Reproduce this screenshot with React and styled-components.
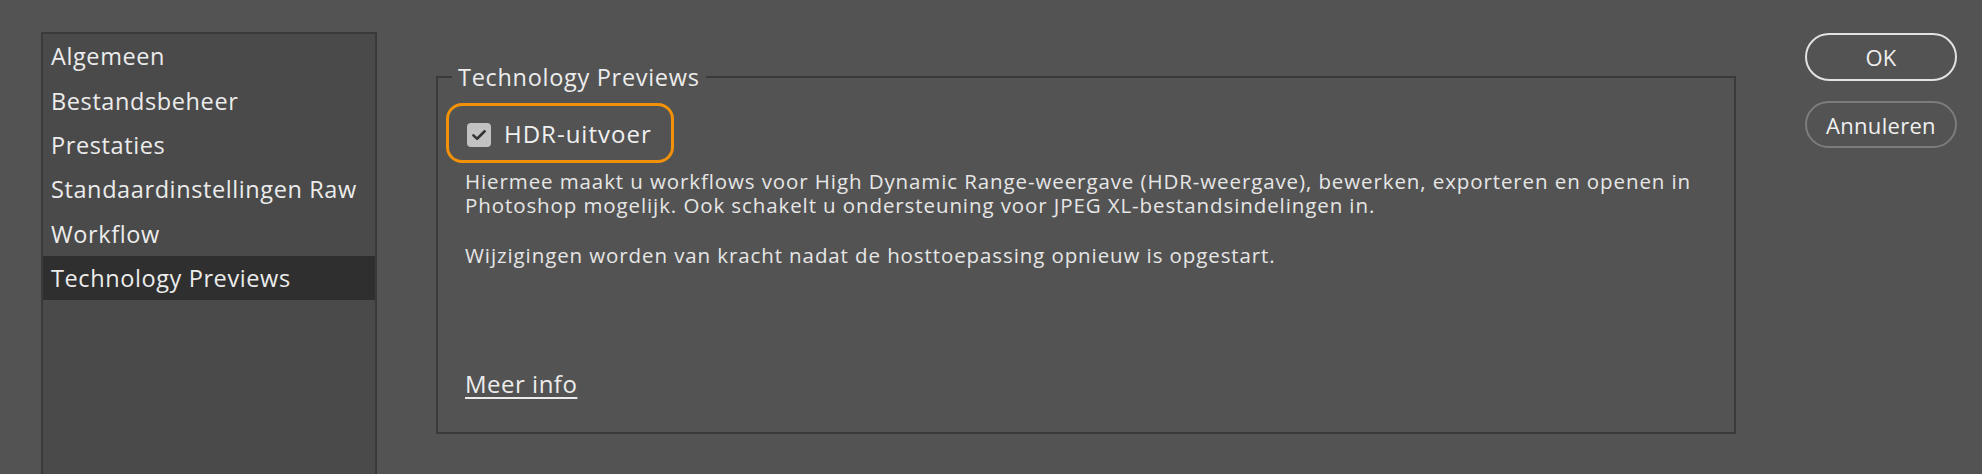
import React from 'react';
import styled, { createGlobalStyle } from 'styled-components';

const GlobalStyle = createGlobalStyle`
  html, body {
    margin: 0;
    background: #535353;
  }
  body {
    font-family: "Open Sans", "Noto Sans", sans-serif;
    color: #e8e8e8;
    -webkit-font-smoothing: antialiased;
  }
`;

const Page = styled.div`
  display: flex;
  align-items: flex-start;
  box-sizing: border-box;
  width: 1982px;
  height: 474px;
  padding: 32px 0 0 41px;
  overflow: hidden;
`;

const Sidebar = styled.ul`
  box-sizing: border-box;
  width: 336px;
  height: 442px;
  margin: 0;
  padding: 0;
  list-style: none;
  background: #4a4a4a;
  border: 2px solid #3a3a3a;
  border-bottom: none;
`;

const NavItem = styled.li`
  display: flex;
  align-items: center;
  height: 44.4px;
  padding-left: 8px;
  font-size: 23.5px;
  letter-spacing: 0.6px;
  color: #ececec;
  background: ${p => (p.$active ? '#2f2f2f' : 'transparent')};
`;

const Main = styled.div`
  margin-left: 59px;
`;

const Group = styled.fieldset`
  box-sizing: border-box;
  display: flex;
  flex-direction: column;
  align-items: flex-start;
  width: 1300px;
  height: 370px;
  margin: 32px 0 0;
  padding: 0 0 0 27px;
  border: 2px solid #3a3a3a;
  min-inline-size: 0;
`;

const Legend = styled.legend`
  margin-left: -13px;
  padding: 0 6px;
  font-size: 23.5px;
  line-height: 26px;
  letter-spacing: 0.7px;
  color: #ececec;
`;

const Highlight = styled.label`
  display: flex;
  align-items: center;
  gap: 13px;
  box-sizing: border-box;
  width: 228px;
  height: 60px;
  margin: 13px 0 0 -19px;
  padding: 0 0 0 18px;
  border: 3px solid #f39208;
  border-radius: 16px;
  font-size: 24px;
  letter-spacing: 1px;
  color: #f0f0f0;
  white-space: nowrap;
`;

const Box = styled.span`
  display: inline-flex;
  align-items: center;
  justify-content: center;
  flex-shrink: 0;
  width: 24px;
  height: 24px;
  border-radius: 4px;
  background: #c2c2c2;
  margin-top: 4px;
`;

const Text = styled.p`
  margin: ${p => (p.$first ? '6px' : '26px')} 0 0;
  font-size: 20.5px;
  line-height: 24px;
  letter-spacing: 0.9px;
  white-space: nowrap;
  color: #e6e6e6;
`;

const MoreLink = styled.a`
  display: inline-block;
  margin-top: 103px;
  font-size: 24px;
  line-height: 27px;
  letter-spacing: 0.5px;
  color: #ececec;
  text-decoration: underline;
  text-decoration-thickness: 2px;
  text-underline-offset: 4px;
`;

const Buttons = styled.div`
  display: flex;
  flex-direction: column;
  gap: 20px;
  margin: 1px 0 0 69px;
`;

const Button = styled.button`
  box-sizing: border-box;
  width: 152px;
  height: ${p => (p.$primary ? '48px' : '47px')};
  border-radius: 24px;
  border: 2px solid ${p => (p.$primary ? '#e2e2e2' : '#7c7c7c')};
  background: transparent;
  font-family: inherit;
  font-size: 22px;
  letter-spacing: 0.3px;
  color: #f0f0f0;
  padding: 0;
`;

const navItems = [
  'Algemeen',
  'Bestandsbeheer',
  'Prestaties',
  'Standaardinstellingen Raw',
  'Workflow',
  'Technology Previews',
];

export default function App() {
  return (
    <>
      <GlobalStyle />
      <Page>
        <Sidebar>
          {navItems.map(name => (
            <NavItem key={name} $active={name === 'Technology Previews'}>{name}</NavItem>
          ))}
        </Sidebar>

        <Main>
          <Group>
            <Legend>Technology Previews</Legend>
            <Highlight>
              <Box>
                <svg width="18" height="18" viewBox="0 0 24 24" fill="none">
                  <path d="M4.5 12.5l5 4.5L19.5 7" stroke="#333" strokeWidth="3.4" strokeLinecap="round" strokeLinejoin="round" />
                </svg>
              </Box>
              HDR-uitvoer
            </Highlight>
            <Text $first>
              Hiermee maakt u workflows voor High Dynamic Range-weergave (HDR-weergave), bewerken, exporteren en openen in
              <br />
              Photoshop mogelijk. Ook schakelt u ondersteuning voor JPEG XL-bestandsindelingen in.
            </Text>
            <Text>Wijzigingen worden van kracht nadat de hosttoepassing opnieuw is opgestart.</Text>
            <MoreLink href="#">Meer info</MoreLink>
          </Group>
        </Main>

        <Buttons>
          <Button $primary>OK</Button>
          <Button>Annuleren</Button>
        </Buttons>
      </Page>
    </>
  );
}
